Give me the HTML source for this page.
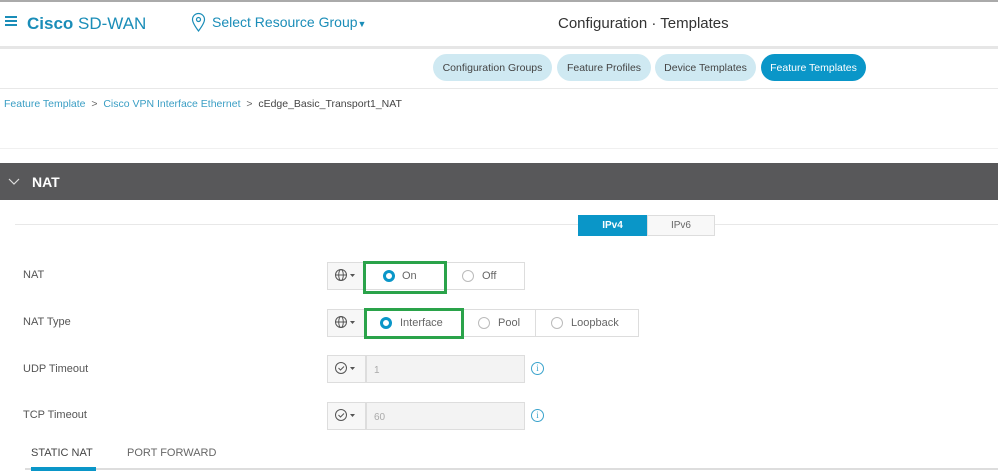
<!DOCTYPE html>
<html><head><style>
*{box-sizing:border-box;margin:0;padding:0}
body{width:998px;height:471px;overflow:hidden;background:#fff;font-family:"Liberation Sans",sans-serif;position:relative;color:#444}
.a{position:absolute}
.pill{position:absolute;top:54px;height:27px;border-radius:14px;background:#cfe9f2;color:#444;font-size:10.5px;line-height:28px;text-align:center}
.lbl{position:absolute;left:23px;font-size:11px;color:#555}
.box{position:absolute;border:1px solid #ddd;background:#fff}
.drop{position:absolute;border:1px solid #ddd;background:#f7f7f7;width:39px;height:28px}
.radio{position:absolute;width:12px;height:12px;border-radius:50%;border:1px solid #bbb;background:#fff}
.radio.on{border:3px solid #0a96c8}
.opt{position:absolute;font-size:11px;color:#666}
.green{position:absolute;border:3px solid #2aa34a}
.info{position:absolute;width:13px;height:13px;border-radius:50%;border:1px solid #3aa3cc;color:#3aa3cc;font-size:9px;line-height:11px;text-align:center;font-family:"Liberation Serif",serif}
</style></head><body>
<div class="a" style="left:0;top:0;width:998px;height:2px;background:#aaa"></div>
<div class="a" style="left:5px;top:16px;width:12px;height:2px;background:#1a8db8;box-shadow:0 4px 0 #1a8db8,0 8px 0 #1a8db8"></div>
<div class="a" style="left:27px;top:14px;font-size:17px;color:#1a8db8"><b>Cisco</b> SD-WAN</div>
<svg class="a" style="left:191px;top:12px" width="15" height="20" viewBox="0 0 15 20"><path d="M7.5 19C3 13 1.5 10 1.5 7.5a6 6 0 0 1 12 0C13.5 10 12 13 7.5 19z" fill="none" stroke="#1a8db8" stroke-width="1.2"/><circle cx="7.5" cy="7.5" r="2" fill="none" stroke="#1a8db8" stroke-width="1.2"/></svg>
<div class="a" style="left:212px;top:14px;font-size:14px;color:#1a8db8">Select Resource Group<span style="font-size:9px">▼</span></div>
<div class="a" style="left:558px;top:15px;font-size:15px;color:#333">Configuration · Templates</div>
<div class="a" style="left:0;top:46px;width:998px;height:3px;background:#e6e6e6"></div>
<div class="pill" style="left:433px;width:119px">Configuration Groups</div>
<div class="pill" style="left:557px;width:94px">Feature Profiles</div>
<div class="pill" style="left:655px;width:101px">Device Templates</div>
<div class="pill" style="left:761px;width:105px;background:#0a96c8;color:#fff">Feature Templates</div>
<div class="a" style="left:0;top:88px;width:998px;height:1px;background:#e8e8e8"></div>
<div class="a" style="left:4px;top:98px;font-size:10.5px;color:#3a9ec4;white-space:pre">Feature Template  <span style="color:#666">&gt;</span>  Cisco VPN Interface Ethernet  <span style="color:#666">&gt;</span>  <span style="color:#444">cEdge_Basic_Transport1_NAT</span></div>
<div class="a" style="left:0;top:148px;width:998px;height:1px;background:#f0f0f0"></div>
<div class="a" style="left:0;top:163px;width:998px;height:37px;background:#58585a"></div>
<svg class="a" style="left:8px;top:178px" width="12" height="8"><path d="M1 1l5 5 5-5" fill="none" stroke="#ddd" stroke-width="1.2"/></svg>
<div class="a" style="left:32px;top:174px;font-size:14px;color:#fff;font-weight:bold">NAT</div>
<div class="a" style="left:15px;top:224px;width:983px;height:1px;background:#e8e8e8"></div>
<div class="a" style="left:578px;top:215px;width:69px;height:21px;background:#0a96c8;color:#fff;font-size:10px;font-weight:bold;text-align:center;line-height:21px">IPv4</div>
<div class="a" style="left:647px;top:215px;width:68px;height:21px;background:#f8f8f8;border:1px solid #ddd;color:#666;font-size:10px;text-align:center;line-height:19px">IPv6</div>
<div class="lbl" style="top:269px">NAT</div>
<div class="lbl" style="top:316px">NAT Type</div>
<div class="lbl" style="top:363px">UDP Timeout</div>
<div class="lbl" style="top:409px">TCP Timeout</div>
<!-- row1 -->
<div class="drop" style="left:327px;top:262px"></div>
<div class="box" style="left:365px;top:262px;width:160px;height:28px"></div>
<div class="box" style="left:446px;top:262px;width:79px;height:28px"></div>
<div class="radio on" style="left:383px;top:270px"></div><div class="opt" style="left:402px;top:270px">On</div>
<div class="radio" style="left:462px;top:270px"></div><div class="opt" style="left:482px;top:270px">Off</div>
<div class="green" style="left:363px;top:261px;width:84px;height:33px"></div>
<!-- row2 -->
<div class="drop" style="left:327px;top:309px"></div>
<div class="box" style="left:365px;top:309px;width:274px;height:28px"></div>
<div class="box" style="left:535px;top:309px;width:104px;height:28px"></div>
<div class="radio on" style="left:380px;top:317px"></div><div class="opt" style="left:400px;top:317px">Interface</div>
<div class="radio" style="left:478px;top:317px"></div><div class="opt" style="left:498px;top:317px">Pool</div>
<div class="radio" style="left:551px;top:317px"></div><div class="opt" style="left:571px;top:317px">Loopback</div>
<div class="green" style="left:364px;top:308px;width:100px;height:31px"></div>
<!-- row3,4 -->
<div class="drop" style="left:327px;top:355px"></div>
<div class="box" style="left:366px;top:355px;width:159px;height:28px;background:#f3f3f3;font-size:10px;color:#aaa;padding:9px 7px">1</div>
<div class="info" style="left:531px;top:362px">i</div>
<div class="drop" style="left:327px;top:402px"></div>
<div class="box" style="left:366px;top:402px;width:159px;height:28px;background:#f3f3f3;font-size:10px;color:#aaa;padding:9px 7px">60</div>
<div class="info" style="left:531px;top:409px">i</div>
<!-- drop icons -->
<svg class="a" style="left:334px;top:268px" width="26" height="16"><circle cx="7" cy="7" r="5.5" fill="none" stroke="#555"/><ellipse cx="7" cy="7" rx="2.3" ry="5.5" fill="none" stroke="#555"/><path d="M1.5 7h11" stroke="#555"/><path d="M16 6h5l-2.5 3z" fill="#555"/></svg>
<svg class="a" style="left:334px;top:315px" width="26" height="16"><circle cx="7" cy="7" r="5.5" fill="none" stroke="#555"/><ellipse cx="7" cy="7" rx="2.3" ry="5.5" fill="none" stroke="#555"/><path d="M1.5 7h11" stroke="#555"/><path d="M16 6h5l-2.5 3z" fill="#555"/></svg>
<svg class="a" style="left:334px;top:361px" width="26" height="16"><circle cx="7" cy="7" r="5.5" fill="none" stroke="#555"/><path d="M4.5 7l2 2 3.5-3.5" fill="none" stroke="#555"/><path d="M16 6h5l-2.5 3z" fill="#555"/></svg>
<svg class="a" style="left:334px;top:408px" width="26" height="16"><circle cx="7" cy="7" r="5.5" fill="none" stroke="#555"/><path d="M4.5 7l2 2 3.5-3.5" fill="none" stroke="#555"/><path d="M16 6h5l-2.5 3z" fill="#555"/></svg>
<div class="a" style="left:31px;top:447px;font-size:11px;color:#444">STATIC NAT</div>
<div class="a" style="left:127px;top:447px;font-size:11px;color:#666">PORT FORWARD</div>
<div class="a" style="left:25px;top:468px;width:973px;height:2px;background:#ddd"></div>
<div class="a" style="left:31px;top:467px;width:65px;height:4px;background:#0a96c8"></div>
</body></html>
